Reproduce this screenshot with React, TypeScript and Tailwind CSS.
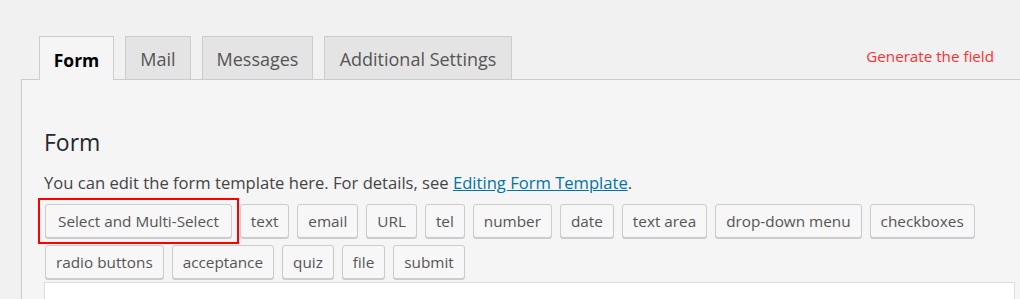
import React from "react";

const tabs = [
  { label: "Form", w: "w-[75px]", active: true },
  { label: "Mail", w: "w-[66px]" },
  { label: "Messages", w: "w-[111px]" },
  { label: "Additional Settings", w: "w-[188px]" },
];

const tags = [
  "Select and Multi-Select",
  "text",
  "email",
  "URL",
  "tel",
  "number",
  "date",
  "text area",
  "drop-down menu",
  "checkboxes",
  "radio buttons",
  "acceptance",
  "quiz",
  "file",
  "submit",
];

export default function App() {
  return (
    <div className="h-[299px] w-[1020px] overflow-hidden bg-[#f1f1f1] pl-[21px] pt-[36px] font-['Open_Sans',sans-serif] text-[#23282d]">
      {/* tab bar */}
      <div className="flex items-end pl-[18px] pr-[26px]">
        <div className="flex items-end gap-[11px]">
          {tabs.map((t) =>
            t.active ? (
              <div
                key={t.label}
                className={`relative z-10 -mb-px flex h-[44px] ${t.w} items-center justify-center border border-b-0 border-[#ccc] bg-[#f5f5f5] pt-[3px] text-[17.5px] font-bold text-[#000]`}
              >
                {t.label}
              </div>
            ) : (
              <div
                key={t.label}
                className={`flex h-[43px] ${t.w} items-center justify-center border border-b-0 border-[#ccc] bg-[#e4e4e4] pt-[3px] text-[18px] text-[#555]`}
              >
                {t.label}
              </div>
            ),
          )}
        </div>
        <span className="mb-[11px] ml-auto text-[15.2px] text-[#ff3030]">Generate the field</span>
      </div>

      {/* panel */}
      <div className="h-[300px] border-l border-t border-[#ccc] bg-[#f5f5f5] pl-[22px] pr-[5px]">
        <h2 className="mt-[47px] h-[30px] text-[23px] font-normal leading-[30px] text-[#23282d]">Form</h2>
        <p className="mt-[15px] h-[22px] text-[16.6px] leading-[22px] text-[#444]">
          You can edit the form template here. For details, see{" "}
          <a className="text-[#0073aa] underline" href="#">
            Editing Form Template
          </a>
          .
        </p>
        <div className="mt-[10px] flex flex-wrap gap-x-[8px] gap-y-[7px] pl-[1px]">
          {tags.map((t, i) => (
            <div key={t} className="relative">
              <button
                className={`h-[34px] rounded-[3px] border border-[#ccc] bg-[#f7f7f7] text-[15.3px] text-[#555] shadow-[0_1px_0_#ccc] ${
                  i === 0 ? "px-[12px]" : "px-[10px]"
                }`}
              >
                {t}
              </button>
              {i === 0 && (
                <span className="pointer-events-none absolute -inset-x-[7px] -inset-y-[6px] border-2 border-[#ff0000]" />
              )}
            </div>
          ))}
        </div>
        <div className="mt-[3px] h-[60px] border border-[#ddd] bg-white" />
      </div>
    </div>
  );
}
